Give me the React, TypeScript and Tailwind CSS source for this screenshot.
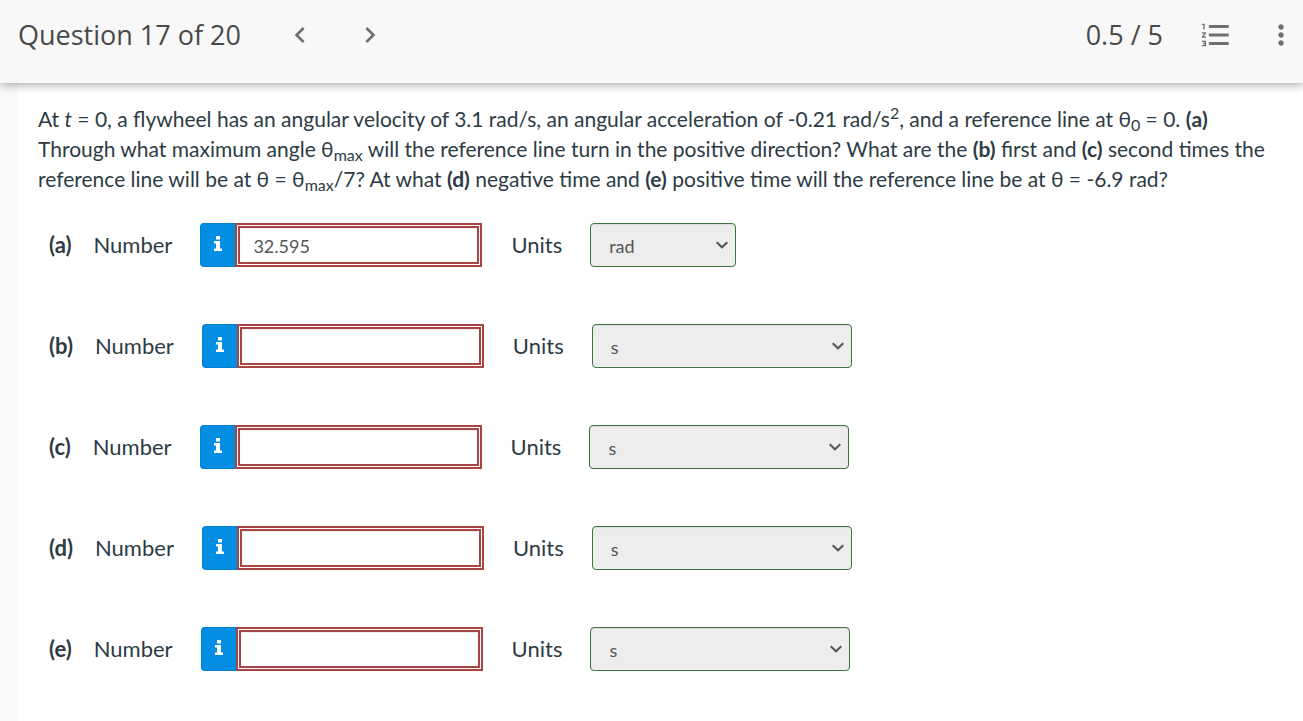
import { useState } from "react";
import {
  MdFormatListNumbered,
  MdKeyboardArrowLeft,
  MdKeyboardArrowRight,
  MdMoreVert,
} from "react-icons/md";

const parts = [
  { id: "a", answer: "32.595", unit: "rad", narrow: true },
  { id: "b", answer: "", unit: "s", narrow: false },
  { id: "c", answer: "", unit: "s", narrow: false },
  { id: "d", answer: "", unit: "s", narrow: false },
  { id: "e", answer: "", unit: "s", narrow: false },
];

const units = ["rad", "rad/s", "rad/s^2", "s", "m"];

type Part = (typeof parts)[number];

function InfoIcon() {
  return (
    <svg viewBox="0 0 8 15" className="h-[15px] w-2" fill="currentColor" aria-hidden="true">
      <path d="M2 0h4v3.5H2zM0 5h6v7.5h2V15H0v-2.5h2v-5H0z" />
    </svg>
  );
}

function AnswerRow({ part }: { part: Part }) {
  const [answer, setAnswer] = useState(part.answer);
  const [unit, setUnit] = useState(part.unit);

  return (
    <div className="flex h-11 items-center">
      <span className="font-bold">({part.id})</span>
      <label htmlFor={`number-${part.id}`} className="ml-[22px]">
        Number
      </label>
      <div className="ml-7 flex h-11">
        <button
          type="button"
          aria-label={`Answer format for part ${part.id}`}
          className="flex w-[35px] items-center justify-center rounded-l-sm border border-r-0 border-[#0480ce] bg-[#028ee3] pb-1 text-white"
        >
          <InfoIcon />
        </button>
        <input
          id={`number-${part.id}`}
          type="text"
          value={answer}
          onChange={(e) => setAnswer(e.target.value)}
          className="w-[247px] border-5 border-double border-[#a94442] bg-white px-[13px] pt-0.5 text-lg text-[#555] shadow-[inset_0_1px_1px_rgba(0,0,0,0.075)]"
        />
      </div>
      <label htmlFor={`units-${part.id}`} className="ml-[29px]">
        Units
      </label>
      <div className={`relative ml-7 h-11 ${part.narrow ? "w-[146px]" : "w-[260px]"}`}>
        <select
          id={`units-${part.id}`}
          value={unit}
          onChange={(e) => setUnit(e.target.value)}
          className="h-full w-full appearance-none rounded-sm border border-[#3c763d] bg-[#ededed] px-[18px] pt-0.5 text-lg text-[#555] shadow-[inset_0_1px_1px_rgba(0,0,0,0.075)]"
        >
          {units.map((u) => (
            <option key={u}>{u}</option>
          ))}
        </select>
        <svg
          viewBox="0 0 12 8"
          className="pointer-events-none absolute top-[18px] right-2 h-2 w-3"
          fill="none"
          stroke="#555"
          strokeWidth="2"
          aria-hidden="true"
        >
          <path d="M0.7 1.2 6 6.3 11.3 1.2" />
        </svg>
      </div>
    </div>
  );
}

export default function App() {
  return (
    <div className="flex min-h-screen flex-col bg-[#fafafa] font-['Lato',sans-serif] text-[22px] leading-[30px] text-[#2d3b45]">
      {/* Question bar */}
      <header className="relative z-10 flex h-[83px] items-center bg-[#f8f8f8] pb-3.5 pl-[18px] font-['Open_Sans',sans-serif] text-[27px] text-[#494949] shadow-[0_1px_10px_rgba(0,0,0,0.4)]">
        <h1>Question 17 of 20</h1>
        <nav className="ml-[43px] flex gap-[38px] text-[32px] text-[#6f6f6f]">
          <button type="button" aria-label="Previous question">
            <MdKeyboardArrowLeft />
          </button>
          <button type="button" aria-label="Next question">
            <MdKeyboardArrowRight />
          </button>
        </nav>
        <span className="ml-auto">0.5 / 5</span>
        <button type="button" aria-label="Question list" className="ml-9 text-[34px] text-[#6f6f6f]">
          <MdFormatListNumbered />
        </button>
        <button type="button" aria-label="More options" className="mr-1.5 ml-8 text-[32px] text-[#6f6f6f]">
          <MdMoreVert />
        </button>
      </header>

      {/* Question */}
      <main className="ml-[18px] flex-1 bg-white pt-[21px] pr-5 pl-5">
        <p className="text-[21px]">
          At <i>t</i> = 0, a flywheel has an angular velocity of 3.1 rad/s, an
          angular acceleration of -0.21 rad/s
          <sup className="text-base">2</sup>, and a reference line at θ
          <sub className="text-base">0</sub> = 0. <b>(a)</b> Through what
          maximum angle θ<sub className="text-base">max</sub> will the
          reference line turn in the positive direction? What are the{" "}
          <b>(b)</b> first and <b>(c)</b> second times the reference line will
          be at θ = θ<sub className="text-base">max</sub>/7? At what{" "}
          <b>(d)</b> negative time and <b>(e)</b> positive time will the
          reference line be at θ = -6.9 rad?
        </p>

        <form className="mt-[29px] flex flex-col gap-[57px] pb-12 pl-[11px]">
          {parts.map((part) => (
            <AnswerRow key={part.id} part={part} />
          ))}
        </form>
      </main>
    </div>
  );
}
